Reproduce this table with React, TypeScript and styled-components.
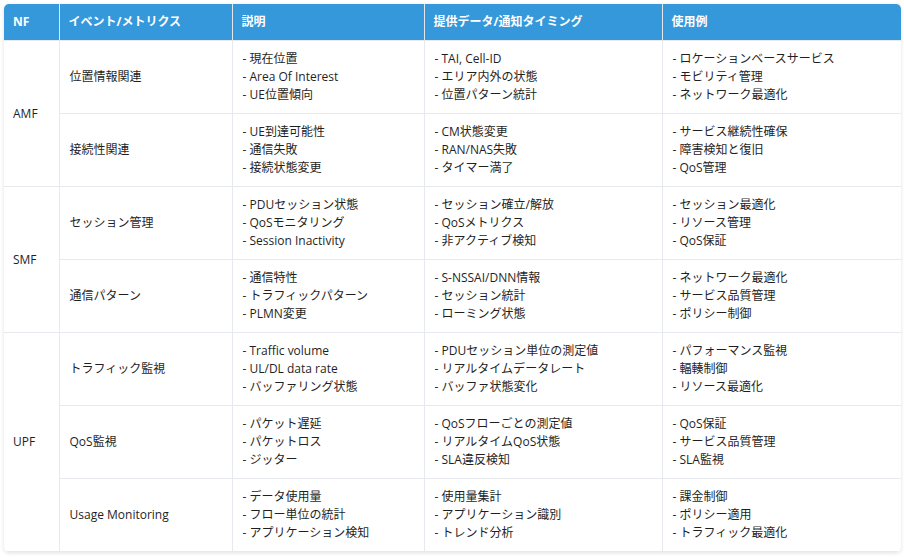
import React from "react";
import styled, { createGlobalStyle } from "styled-components";

const Global = createGlobalStyle`
  html, body { margin: 0; padding: 0; background: #ffffff; }
  body {
    font-family: "Open Sans", "Noto Sans CJK JP", sans-serif;
    color: #1f1f1f;
  }
`;

const Page = styled.div`
  padding: 4px 3px 4px 4px;
`;

const Card = styled.div`
  border-radius: 5px;
  overflow: hidden;
  box-shadow: 0 1px 4px rgba(0, 0, 0, 0.12);
  background: #ffffff;
`;

const Table = styled.table`
  width: 897px;
  border-collapse: collapse;
  table-layout: fixed;
  font-size: 12px;
  line-height: 18px;
`;

const Th = styled.th`
  background: #3498db;
  color: #ffffff;
  font-weight: 700;
  text-align: left;
  padding: 9px 9px;
  border-left: 1px solid #e2e8ee;
  height: 18px;
  &:first-child { border-left: none; }
`;

const Td = styled.td`
  padding: 9px 10px;
  border: 1px solid #e6eaef;
  vertical-align: middle;
  height: 54px;
  &:first-child { border-left: none; }
  &:last-child { border-right: none; }
`;

const NfCell = styled(Td)`
  padding-left: 9px;
`;

const Line = styled.div`
  white-space: nowrap;
`;

type Row = { event: string; desc: string[]; data: string[]; use: string[] };
type Group = { nf: string; rows: Row[] };

const groups: Group[] = [
  {
    nf: "AMF",
    rows: [
      {
        event: "位置情報関連",
        desc: ["現在位置", "Area Of Interest", "UE位置傾向"],
        data: ["TAI, Cell-ID", "エリア内外の状態", "位置パターン統計"],
        use: ["ロケーションベースサービス", "モビリティ管理", "ネットワーク最適化"],
      },
      {
        event: "接続性関連",
        desc: ["UE到達可能性", "通信失敗", "接続状態変更"],
        data: ["CM状態変更", "RAN/NAS失敗", "タイマー満了"],
        use: ["サービス継続性確保", "障害検知と復旧", "QoS管理"],
      },
    ],
  },
  {
    nf: "SMF",
    rows: [
      {
        event: "セッション管理",
        desc: ["PDUセッション状態", "QoSモニタリング", "Session Inactivity"],
        data: ["セッション確立/解放", "QoSメトリクス", "非アクティブ検知"],
        use: ["セッション最適化", "リソース管理", "QoS保証"],
      },
      {
        event: "通信パターン",
        desc: ["通信特性", "トラフィックパターン", "PLMN変更"],
        data: ["S-NSSAI/DNN情報", "セッション統計", "ローミング状態"],
        use: ["ネットワーク最適化", "サービス品質管理", "ポリシー制御"],
      },
    ],
  },
  {
    nf: "UPF",
    rows: [
      {
        event: "トラフィック監視",
        desc: ["Traffic volume", "UL/DL data rate", "バッファリング状態"],
        data: ["PDUセッション単位の測定値", "リアルタイムデータレート", "バッファ状態変化"],
        use: ["パフォーマンス監視", "輻輳制御", "リソース最適化"],
      },
      {
        event: "QoS監視",
        desc: ["パケット遅延", "パケットロス", "ジッター"],
        data: ["QoSフローごとの測定値", "リアルタイムQoS状態", "SLA違反検知"],
        use: ["QoS保証", "サービス品質管理", "SLA監視"],
      },
      {
        event: "Usage Monitoring",
        desc: ["データ使用量", "フロー単位の統計", "アプリケーション検知"],
        data: ["使用量集計", "アプリケーション識別", "トレンド分析"],
        use: ["課金制御", "ポリシー適用", "トラフィック最適化"],
      },
    ],
  },
];

const List = ({ items }: { items: string[] }) => (
  <>
    {items.map((t) => (
      <Line key={t}>- {t}</Line>
    ))}
  </>
);

export default function App() {
  return (
    <>
      <Global />
      <Page>
        <Card>
          <Table>
            <colgroup>
              <col style={{ width: 55 }} />
              <col style={{ width: 173 }} />
              <col style={{ width: 192 }} />
              <col style={{ width: 238 }} />
              <col style={{ width: 239 }} />
            </colgroup>
            <thead>
              <tr>
                <Th>NF</Th>
                <Th>イベント/メトリクス</Th>
                <Th>説明</Th>
                <Th>提供データ/通知タイミング</Th>
                <Th>使用例</Th>
              </tr>
            </thead>
            <tbody>
              {groups.map((g) =>
                g.rows.map((r, i) => (
                  <tr key={g.nf + r.event}>
                    {i === 0 && <NfCell rowSpan={g.rows.length}>{g.nf}</NfCell>}
                    <Td>{r.event}</Td>
                    <Td>
                      <List items={r.desc} />
                    </Td>
                    <Td>
                      <List items={r.data} />
                    </Td>
                    <Td>
                      <List items={r.use} />
                    </Td>
                  </tr>
                ))
              )}
            </tbody>
          </Table>
        </Card>
      </Page>
    </>
  );
}
